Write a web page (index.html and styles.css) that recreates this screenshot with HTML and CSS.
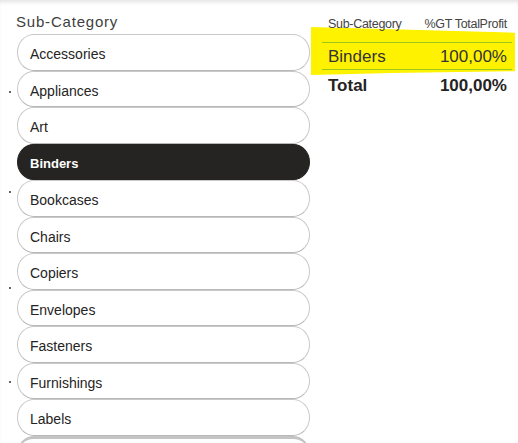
FILE: index.html
```html
<!DOCTYPE html>
<html lang="en">
<head>
  <meta charset="UTF-8">
  <title>Sub-Category</title>
  <link rel="stylesheet" href="styles.css">
</head>
<body>
  <div class="page">
    <div class="slicer">
      <div class="slicer-title">Sub-Category</div>
      <div class="slicer-body">
        <div class="gutter">
          <span class="dot d1"></span>
          <span class="dot d2"></span>
          <span class="dot d3"></span>
          <span class="dot d4"></span>
        </div>
        <div class="items">
          <div class="pill">Accessories</div>
          <div class="pill">Appliances</div>
          <div class="pill">Art</div>
          <div class="pill selected">Binders</div>
          <div class="pill">Bookcases</div>
          <div class="pill">Chairs</div>
          <div class="pill">Copiers</div>
          <div class="pill">Envelopes</div>
          <div class="pill">Fasteners</div>
          <div class="pill">Furnishings</div>
          <div class="pill">Labels</div>
          <div class="pill peek"></div>
        </div>
      </div>
    </div>

    <div class="table">
      <div class="row head">
        <span>Sub-Category</span>
        <span>%GT TotalProfit</span>
      </div>
      <div class="row data">
        <span>Binders</span>
        <span>100,00%</span>
      </div>
      <div class="row total">
        <span>Total</span>
        <span>100,00%</span>
      </div>
    </div>
  </div>
</body>
</html>
```

FILE: styles.css
```css
* {
  margin: 0;
  padding: 0;
  box-sizing: border-box;
}
html, body {
  height: 100%;
  overflow: hidden;
}
body {
  background: #fff;
  font-family: "Liberation Sans", Arial, sans-serif;
  color: #252423;
}
.page {
  position: relative;
  z-index: 0;
  display: flex;
  height: 100%;
  padding-top: 12px;
  box-shadow: inset 0 4px 4px -2px #e2e2e2;
}
.slicer {
  width: 311px;
  flex-shrink: 0;
}
.slicer-title {
  padding-left: 16px;
  font-size: 15px;
  line-height: 20px;
  letter-spacing: 0.8px;
  color: #404040;
  margin-bottom: 2px;
}
.slicer-body {
  display: flex;
}
.gutter {
  width: 17px;
  flex-shrink: 0;
  display: flex;
  flex-direction: column;
  align-items: center;
  padding-left: 2px;
}
.dot {
  width: 2px;
  height: 2px;
  background: #333;
  border-radius: 50%;
}
.d1 { margin-top: 57px; }
.d2 { margin-top: 98px; }
.d3 { margin-top: 94px; }
.d4 { margin-top: 92px; }
.items {
  width: 293px;
  display: flex;
  flex-direction: column;
}
.pill {
  height: 36.5px;
  flex-shrink: 0;
  border: 1px solid #c9c9c9;
  border-bottom-color: #b8b8b8;
  border-radius: 17px / 50%;
  padding: 4px 0 0 12px;
  font-size: 14px;
  line-height: 30px;
  color: #252423;
  background: #fff;
}
.pill.selected {
  background: #252423;
  border-color: #252423;
  color: #fff;
  font-weight: bold;
  font-size: 13px;
}
.pill.peek {
  border-top: 3px solid #c4c4c4;
}
.table {
  position: relative;
  width: 190px;
  margin-left: 11px;
}
.table::before {
  content: "";
  position: absolute;
  left: -11px;
  right: -3px;
  top: 15px;
  height: 48px;
  background: #fff200;
  clip-path: polygon(0 0, 100% 12%, 100% 92%, 40% 96%, 0 100%);
  z-index: -1;
}
.row {
  display: flex;
  justify-content: space-between;
  padding: 0 5px 0 6px;
}
.head {
  margin-top: 4px;
  height: 27px;
  font-size: 12.5px;
  letter-spacing: -0.3px;
  line-height: 16px;
  color: #444;
  border-bottom: 1px solid #98c81c;
}
.data {
  height: 27px;
  padding-top: 1px;
  font-size: 17px;
  line-height: 25px;
  color: #333;
  border-bottom: 1px solid #98c81c;
}
.total {
  padding-top: 3px;
  font-size: 17px;
  font-weight: bold;
  line-height: 26px;
  color: #252423;
}
```
